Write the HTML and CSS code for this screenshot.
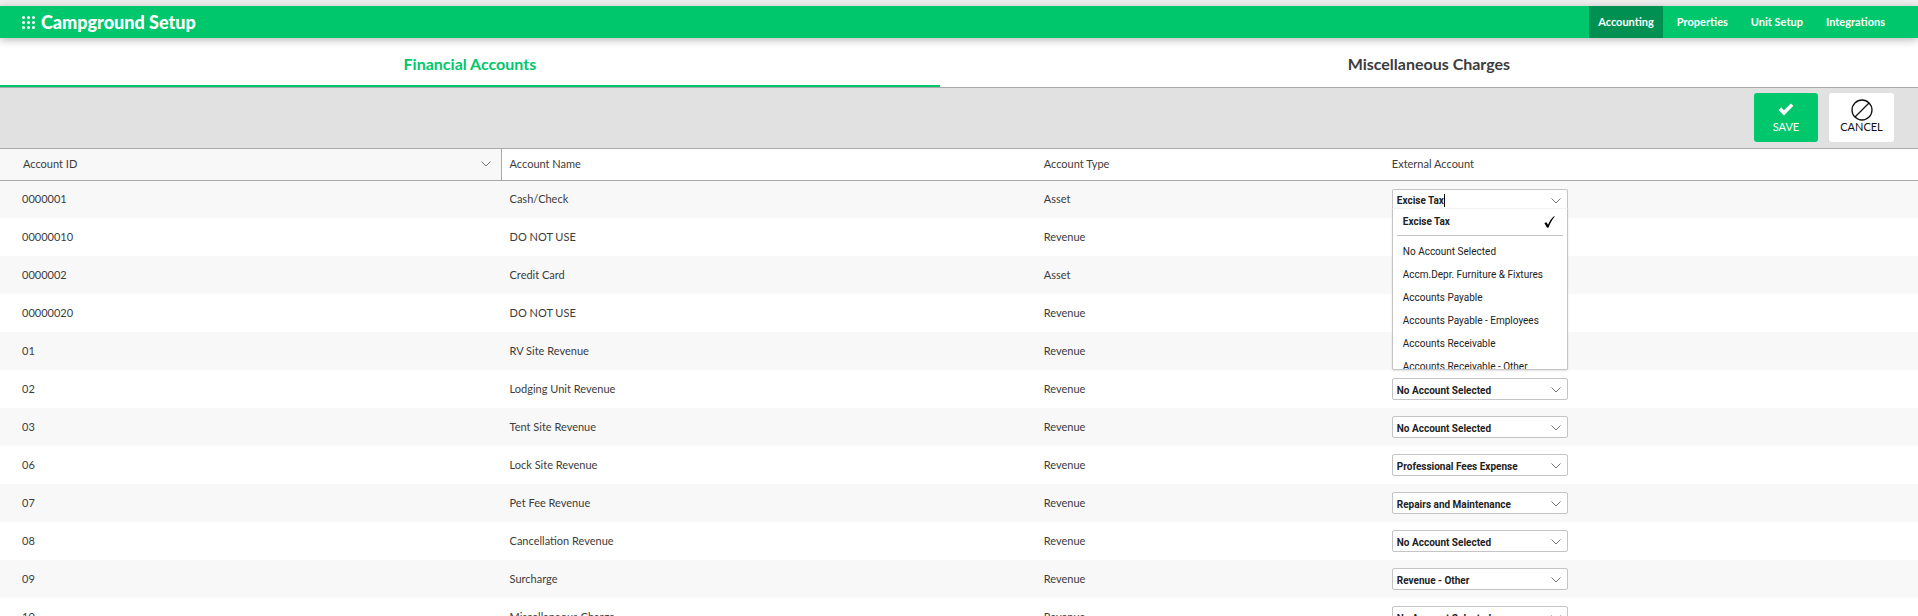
FILE: index.html
```html
<!DOCTYPE html>
<html lang="en">
<head>
<meta charset="utf-8">
<title>Campground Setup</title>
<link rel="stylesheet" href="styles.css">
</head>
<body>
<svg class="defs" aria-hidden="true">
  <symbol id="chevron" viewBox="0 0 10 6"><path d="M0.5 0.5 L5 5 L9.5 0.5" fill="none" stroke="currentColor" stroke-width="0.9"/></symbol>
</svg>
<header class="topbar">
  <div class="brand">
    <svg class="brand-grid" viewBox="0 0 13 13" fill="currentColor" aria-hidden="true">
      <circle cx="1.5" cy="1.5" r="1.5"/><circle cx="6.5" cy="1.5" r="1.5"/><circle cx="11.5" cy="1.5" r="1.5"/>
      <circle cx="1.5" cy="6.5" r="1.5"/><circle cx="6.5" cy="6.5" r="1.5"/><circle cx="11.5" cy="6.5" r="1.5"/>
      <circle cx="1.5" cy="11.5" r="1.5"/><circle cx="6.5" cy="11.5" r="1.5"/><circle cx="11.5" cy="11.5" r="1.5"/>
    </svg>
    <h1 class="brand-title">Campground Setup</h1>
  </div>
  <nav class="nav">
    <a class="nav-link nav-link-active" href="#">Accounting</a>
    <a class="nav-link" href="#">Properties</a>
    <a class="nav-link" href="#">Unit Setup</a>
    <a class="nav-link" href="#">Integrations</a>
  </nav>
</header>
<div class="tabs" role="tablist">
  <button class="tab tab-active" role="tab" aria-selected="true">Financial Accounts</button>
  <button class="tab" role="tab" aria-selected="false">Miscellaneous Charges</button>
</div>
<div class="toolbar">
  <button class="action action-save">
    <svg class="icon-save" viewBox="0 0 16 13" aria-hidden="true"><path d="M0.5 7 L3.2 4.4 L6 7.2 L12.8 0.4 L15.4 2.8 L6 12.6 Z" fill="currentColor"/></svg>
    SAVE
  </button>
  <button class="action action-cancel">
    <svg class="icon-cancel" viewBox="0 0 22 22" fill="none" stroke="currentColor" stroke-width="1.3" aria-hidden="true"><circle cx="11" cy="11" r="10"/><path d="M4 18 L18 4"/></svg>
    CANCEL
  </button>
</div>
<main class="content">
<table class="accounts">
  <colgroup><col class="col-id"><col class="col-name"><col class="col-type"><col></colgroup>
  <thead>
    <tr>
      <th class="sorted"><div class="sort">Account ID<svg class="chevron"><use href="#chevron"/></svg></div></th>
      <th>Account Name</th><th>Account Type</th><th>External Account</th>
    </tr>
  </thead>
  <tbody>
    <tr><td>0000001</td><td>Cash/Check</td><td>Asset</td><td class="cell-combo">
      <div class="combo">
        <div class="combo-field"><input class="combo-input" aria-label="External account for Cash/Check" value="Excise Tax"><span class="caret"></span><svg class="chevron"><use href="#chevron"/></svg></div>
        <div class="combo-list" role="listbox">
          <div class="option option-selected" role="option" aria-selected="true">Excise Tax<svg class="option-check" viewBox="0 0 11 12" aria-hidden="true"><path d="M0.4 7 L2.4 6.2 L4 8.8 C5.4 5.4 7.4 2.4 10 0.2 L10.8 0.6 C8 3.8 6 7.6 4.6 11.6 L3 11.8 Z" fill="#000"/></svg></div>
          <div class="option" role="option">No Account Selected</div>
          <div class="option" role="option">Accm.Depr. Furniture &amp; Fixtures</div>
          <div class="option" role="option">Accounts Payable</div>
          <div class="option" role="option">Accounts Payable - Employees</div>
          <div class="option" role="option">Accounts Receivable</div>
          <div class="option" role="option">Accounts Receivable - Other</div>
        </div>
      </div></td></tr>
    <tr><td>00000010</td><td>DO NOT USE</td><td>Revenue</td><td></td></tr>
    <tr><td>0000002</td><td>Credit Card</td><td>Asset</td><td></td></tr>
    <tr><td>00000020</td><td>DO NOT USE</td><td>Revenue</td><td></td></tr>
    <tr><td>01</td><td>RV Site Revenue</td><td>Revenue</td><td></td></tr>
    <tr><td>02</td><td>Lodging Unit Revenue</td><td>Revenue</td><td><div class="picker"><select class="picker-select" aria-label="External account for Lodging Unit Revenue"><option>No Account Selected</option></select><svg class="chevron"><use href="#chevron"/></svg></div></td></tr>
    <tr><td>03</td><td>Tent Site Revenue</td><td>Revenue</td><td><div class="picker"><select class="picker-select" aria-label="External account for Tent Site Revenue"><option>No Account Selected</option></select><svg class="chevron"><use href="#chevron"/></svg></div></td></tr>
    <tr><td>06</td><td>Lock Site Revenue</td><td>Revenue</td><td><div class="picker"><select class="picker-select" aria-label="External account for Lock Site Revenue"><option>Professional Fees Expense</option></select><svg class="chevron"><use href="#chevron"/></svg></div></td></tr>
    <tr><td>07</td><td>Pet Fee Revenue</td><td>Revenue</td><td><div class="picker"><select class="picker-select" aria-label="External account for Pet Fee Revenue"><option>Repairs and Maintenance</option></select><svg class="chevron"><use href="#chevron"/></svg></div></td></tr>
    <tr><td>08</td><td>Cancellation Revenue</td><td>Revenue</td><td><div class="picker"><select class="picker-select" aria-label="External account for Cancellation Revenue"><option>No Account Selected</option></select><svg class="chevron"><use href="#chevron"/></svg></div></td></tr>
    <tr><td>09</td><td>Surcharge</td><td>Revenue</td><td><div class="picker"><select class="picker-select" aria-label="External account for Surcharge"><option>Revenue - Other</option></select><svg class="chevron"><use href="#chevron"/></svg></div></td></tr>
    <tr><td>10</td><td>Miscellaneous Charge</td><td>Revenue</td><td><div class="picker"><select class="picker-select" aria-label="External account for Miscellaneous Charge"><option>No Account Selected</option></select><svg class="chevron"><use href="#chevron"/></svg></div></td></tr>
  </tbody>
</table>
</main>
</body>
</html>
```
FILE: styles.css
```css
* { box-sizing: border-box; }
body {
  margin: 0;
  padding-top: 6px;
  height: 100vh;
  display: flex;
  flex-direction: column;
  overflow: hidden;
  background: #efefef;
  color: #3c3c3c;
  font: 11px/22px Lato, "Liberation Sans", sans-serif;
}
button, input, select { font: inherit; color: inherit; }
.defs { display: none; }

.topbar {
  position: relative;
  z-index: 1;
  flex: none;
  display: flex;
  justify-content: space-between;
  height: 32px;
  padding: 0 24px 0 22px;
  background: #00c76c;
  color: #fff;
  box-shadow: 0 2px 8px rgba(0, 0, 0, 0.28);
}
.brand { display: flex; align-items: center; gap: 6px; }
.brand-grid { width: 13px; height: 13px; }
.brand-title { margin: 0; font-size: 18px; font-weight: 900; line-height: 30px; }
.nav { display: flex; gap: 5px; }
.nav-link {
  padding: 0 9px;
  color: #fff;
  font-size: 11px;
  font-weight: 700;
  line-height: 31px;
  text-decoration: none;
}
.nav-link-active { background: #009152; }

.tabs {
  flex: none;
  display: grid;
  grid-template-columns: 49fr 51fr;
  height: 50px;
  background: #fff;
  border-bottom: 1px solid #a9a9a9;
}
.tab {
  padding: 5px 0 0;
  border: 0;
  border-bottom: 2px solid transparent;
  background: none;
  font-size: 16px;
  font-weight: 700;
}
.tab-active { color: #00c76c; border-color: #00c76c; }

.toolbar {
  flex: none;
  display: flex;
  justify-content: flex-end;
  gap: 11px;
  padding: 5px 24px 6px;
  background: #e1e1e1;
  border-bottom: 1px solid #a9a9a9;
}
.action {
  display: flex;
  flex-direction: column;
  align-items: center;
  justify-content: flex-end;
  width: 65px;
  height: 49px;
  padding: 0 0 9px;
  border: 0;
  border-radius: 3px;
  line-height: 12px;
}
.action-save { width: 64px; background: #00c76c; color: #fff; gap: 5px; }
.action-cancel { background: #fff; color: #111; }
.icon-save { width: 16px; height: 13px; }
.icon-cancel { width: 22px; height: 22px; }

.content { flex: 1; min-height: 0; overflow: hidden; background: #fff; }
.accounts { width: 100%; table-layout: fixed; border-collapse: separate; border-spacing: 0; }
.col-id { width: 26.15%; }
.col-name { width: 27.85%; }
.col-type { width: 18.15%; }
th {
  height: 32px;
  padding: 0 8px 2px;
  border-bottom: 1px solid #a9a9a9;
  font-weight: 400;
  line-height: 29px;
  text-align: left;
}
.sorted { padding: 0 10px 2px 23px; background: #f8f8f8; border-right: 1px solid #a9a9a9; }
.sort { display: flex; align-items: center; justify-content: space-between; }
.chevron { flex: none; width: 10px; height: 6px; color: #666; }
td { height: 38px; padding: 8px; vertical-align: top; line-height: 22px; }
td:first-child { padding-left: 22px; }
tbody tr:nth-child(odd) { background: #f8f8f8; }
tbody tr:first-child td { height: 37px; padding-top: 7px; }
tbody tr:first-child .cell-combo { padding: 8px 8px 7px; }

.picker {
  display: flex;
  align-items: center;
  width: 176px;
  height: 22px;
  padding: 2px 6px 0 0;
  border: 1px solid #c4c4c4;
  border-radius: 2px;
  background: #fff;
  color: #222;
}
.picker-select {
  flex: 1;
  min-width: 0;
  padding: 2px 0 0 4px;
  border: 0;
  background: none;
  appearance: none;
  font-family: Roboto, "Liberation Sans", sans-serif;
  font-size: 10px;
  font-weight: 700;
}

.combo {
  position: relative;
  width: 176px;
  height: 22px;
  color: #222;
  font-family: Roboto, "Liberation Sans", sans-serif;
  font-size: 10px;
}
.combo-field {
  display: flex;
  align-items: center;
  height: 22px;
  padding: 0 6px 0 4px;
  border: 1px solid #c4c4c4;
  border-bottom: 0;
  border-radius: 2px 2px 0 0;
  background: #fff;
}
.combo-input {
  field-sizing: content;
  padding: 0;
  border: 0;
  outline: 0;
  background: none;
  font-weight: 700;
}
.caret { width: 1px; height: 13px; margin-right: auto; background: #000; }
.combo-list {
  position: absolute;
  z-index: 2;
  top: 19px;
  left: 0;
  width: 100%;
  height: 162px;
  overflow: hidden;
  border: 1px solid #c4c4c4;
  border-top-color: #f2f2f2;
  border-radius: 0 0 2px 2px;
  background: #fff;
  box-shadow: 0 1px 2px rgba(0, 0, 0, 0.12);
}
.option { padding: 0 10px; line-height: 23px; }
.option-selected {
  display: flex;
  align-items: center;
  justify-content: space-between;
  margin: 0 4px 4px;
  padding: 1px 8px 2px 6px;
  border-bottom: 1px solid #c4c4c4;
  font-weight: 700;
}
.option-check { width: 11px; height: 12px; }
```
